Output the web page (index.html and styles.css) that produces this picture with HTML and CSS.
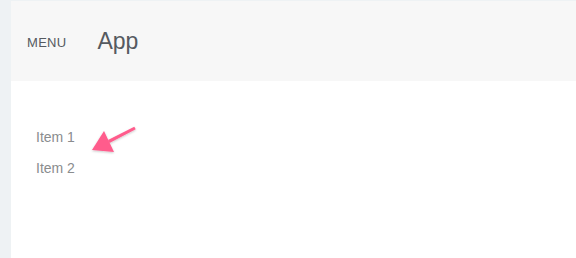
FILE: index.html
```html
<!DOCTYPE html>
<html>
<head>
<meta charset="utf-8">
<link rel="stylesheet" href="styles.css">
</head>
<body>
<div class="shell">
  <div class="sidebar"></div>
  <div class="main">
    <header class="header">
      <span class="menu">MENU</span>
      <h1 class="title">App</h1>
    </header>
    <ul class="items">
      <li>Item 1</li>
      <li>Item 2</li>
    </ul>
    <svg class="arrow" width="64" height="42" viewBox="0 0 64 42">
      <defs>
        <filter id="sh" x="-20%" y="-20%" width="140%" height="150%">
          <feDropShadow dx="0" dy="1" stdDeviation="1" flood-color="#000" flood-opacity="0.22"/>
        </filter>
      </defs>
      <g filter="url(#sh)" fill="#ff5b8c" stroke="none">
        <polygon points="57.7,10.3 56.3,7.7 30,21 31.5,24"/>
        <polygon points="14,31 26,12 36,33"/>
      </g>
    </svg>
  </div>
</div>
</body>
</html>
```
FILE: styles.css
```css
html, body {
  margin: 0;
  padding: 0;
}
body {
  background: #eef2f4;
  font-family: "Liberation Sans", Arial, sans-serif;
  width: 576px;
  height: 258px;
  overflow: hidden;
}
.shell {
  display: flex;
  height: 258px;
}
.sidebar {
  width: 11px;
  flex: none;
}
.main {
  position: relative;
  flex: 1;
  margin-top: 1px;
  background: #fff;
}
.header {
  height: 80px;
  background: #f7f7f7;
  display: flex;
  align-items: center;
  padding-left: 16px;
  gap: 30px;
}
.menu {
  font-size: 13px;
  color: #555a60;
  letter-spacing: 0.3px;
  margin-top: 2px;
}
.title {
  margin: 0;
  font-size: 23px;
  font-weight: normal;
  color: #555a60;
  margin-left: 1px;
}
.items {
  list-style: none;
  margin: 0;
  padding: 48px 0 0 25px;
}
.items li {
  font-size: 14px;
  color: #8a8c8e;
  line-height: 16px;
  margin-bottom: 15px;
}
.arrow {
  position: absolute;
  left: 67px;
  top: 118px;
}
```
